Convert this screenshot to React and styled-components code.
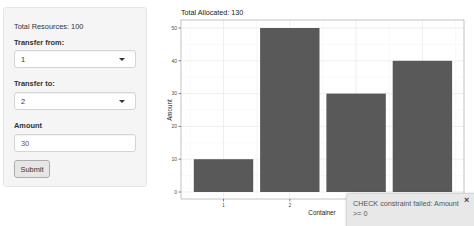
import React from "react";
import styled, { createGlobalStyle } from "styled-components";

const GlobalStyle = createGlobalStyle`
  html, body {
    margin: 0;
    padding: 0;
    background: #ffffff;
    font-family: "Liberation Sans", Arial, sans-serif;
    color: #333333;
  }
`;

const Page = styled.div`
  position: relative;
  width: 474px;
  height: 226px;
  overflow: hidden;
  display: flex;
  align-items: flex-start;
  padding: 7px 0 0 3px;
  box-sizing: border-box;
`;

const Sidebar = styled.div`
  width: 144px;
  height: 180px;
  box-sizing: border-box;
  background: #f5f5f5;
  border: 1px solid #e6e6e6;
  border-radius: 3px;
  padding: 14px 10px 0 10px;
  display: flex;
  flex-direction: column;
`;

const Info = styled.div`
  font-size: 7.4px;
  line-height: 10px;
  margin-bottom: 6px;
`;

const Label = styled.label`
  font-size: 7.4px;
  font-weight: bold;
  line-height: 10px;
  margin-bottom: ${(p) => p.$gap}px;
`;

const Field = styled.div`
  height: 18px;
  box-sizing: border-box;
  background: #ffffff;
  border: 1px solid #d4d4d4;
  border-radius: 3px;
  display: flex;
  align-items: center;
  justify-content: space-between;
  padding: 0 10px 0 6px;
  font-size: 7.4px;
  color: ${(p) => (p.$muted ? "#555555" : "#333333")};
  margin-bottom: ${(p) => p.$gap}px;
  box-shadow: inset 0 1px 1px rgba(0, 0, 0, 0.05);
`;

const Caret = styled.span`
  width: 0;
  height: 0;
  border-left: 3px solid transparent;
  border-right: 3px solid transparent;
  border-top: 3px solid #333333;
`;

const Button = styled.button`
  align-self: flex-start;
  width: 36px;
  height: 18px;
  padding: 0;
  font-family: "Liberation Sans", Arial, sans-serif;
  font-size: 7.4px;
  color: #333333;
  background: #e6e6e6;
  border: 1px solid #adadad;
  border-radius: 3px;
`;

const Main = styled.div`
  margin-left: 13px;
  width: 314px;
  display: flex;
  flex-direction: column;
`;

const Title = styled.div`
  font-size: 7.2px;
  line-height: 12px;
  padding-left: 21px;
  color: #1a1a1a;
`;

const Toast = styled.div`
  position: absolute;
  left: 346px;
  top: 193px;
  width: 140px;
  height: 40px;
  box-sizing: border-box;
  background: #e8e8e8;
  border: 1px solid #d6d6d6;
  border-radius: 3px;
  padding: 5px 24px 0 6px;
  font-size: 7.2px;
  line-height: 10px;
  color: #555555;
  box-shadow: 0 0 3px rgba(0, 0, 0, 0.15);
`;

const Close = styled.span`
  position: absolute;
  left: 117px;
  top: 1px;
  font-size: 9px;
  font-weight: bold;
  color: #444444;
`;

const data = [10, 50, 30, 40];
const ux = 66.3;
const x0 = 63.5 - ux; // x for value 0 in svg coordinates
const xs = (v) => x0 + v * ux;
const ys = (v) => 173 - v * 3.28;

function Chart() {
  const minorX = [0.5, 1.5, 2.5, 3.5, 4.5];
  const majorX = [1, 2, 3, 4];
  const majorY = [0, 10, 20, 30, 40, 50];
  const minorY = [5, 15, 25, 35, 45];
  return (
    <svg width="314" height="207" viewBox="0 0 314 207">
      <rect x="21" y="1" width="283" height="179" fill="#ffffff" />
      {minorY.map((v) => (
        <line key={"my" + v} x1="21" x2="304" y1={ys(v)} y2={ys(v)} stroke="#f2f2f2" strokeWidth="0.5" />
      ))}
      {minorX.map((v) => (
        <line key={"mx" + v} y1="1" y2="180" x1={xs(v)} x2={xs(v)} stroke="#f2f2f2" strokeWidth="0.5" />
      ))}
      {majorY.map((v) => (
        <line key={"gy" + v} x1="21" x2="304" y1={ys(v)} y2={ys(v)} stroke="#ebebeb" strokeWidth="0.8" />
      ))}
      {majorX.map((v) => (
        <line key={"gx" + v} y1="1" y2="180" x1={xs(v)} x2={xs(v)} stroke="#ebebeb" strokeWidth="0.8" />
      ))}
      {data.map((d, i) => (
        <rect
          key={i}
          x={xs(i + 1) - 29.7}
          y={ys(d)}
          width="59.4"
          height={ys(0) - ys(d)}
          fill="#595959"
        />
      ))}
      <rect x="21" y="1" width="283" height="179" fill="none" stroke="#b3b3b3" strokeWidth="0.8" />
      {majorY.map((v) => (
        <g key={"ty" + v}>
          <line x1="18.5" x2="21" y1={ys(v)} y2={ys(v)} stroke="#333333" strokeWidth="0.6" />
          <text x="17" y={ys(v) + 1.8} fontSize="5" textAnchor="end" fill="#4d4d4d" fontFamily="Liberation Sans, Arial, sans-serif">
            {v}
          </text>
        </g>
      ))}
      {majorX.map((v) => (
        <g key={"tx" + v}>
          <line y1="180" y2="182.5" x1={xs(v)} x2={xs(v)} stroke="#333333" strokeWidth="0.6" />
          <text x={xs(v)} y="188" fontSize="5" textAnchor="middle" fill="#4d4d4d" fontFamily="Liberation Sans, Arial, sans-serif">
            {v}
          </text>
        </g>
      ))}
      <text x="162" y="196" fontSize="6.3" textAnchor="middle" fill="#1a1a1a" fontFamily="Liberation Sans, Arial, sans-serif">
        Container
      </text>
      <text
        x="0"
        y="0"
        fontSize="6.3"
        textAnchor="middle"
        fill="#1a1a1a"
        fontFamily="Liberation Sans, Arial, sans-serif"
        transform="translate(12 91) rotate(-90)"
      >
        Amount
      </text>
    </svg>
  );
}

export default function App() {
  return (
    <>
      <GlobalStyle />
      <Page>
        <Sidebar>
          <Info>Total Resources: 100</Info>
          <Label $gap={2}>Transfer from:</Label>
          <Field $gap={11}>
            1<Caret />
          </Field>
          <Label $gap={3}>Transfer to:</Label>
          <Field $gap={11}>
            2<Caret />
          </Field>
          <Label $gap={3}>Amount</Label>
          <Field $gap={8} $muted>
            30
          </Field>
          <Button>Submit</Button>
        </Sidebar>
        <Main>
          <Title>Total Allocated: 130</Title>
          <Chart />
        </Main>
        <Toast>
          CHECK constraint failed: Amount &gt;= 0
          <Close>×</Close>
        </Toast>
      </Page>
    </>
  );
}
